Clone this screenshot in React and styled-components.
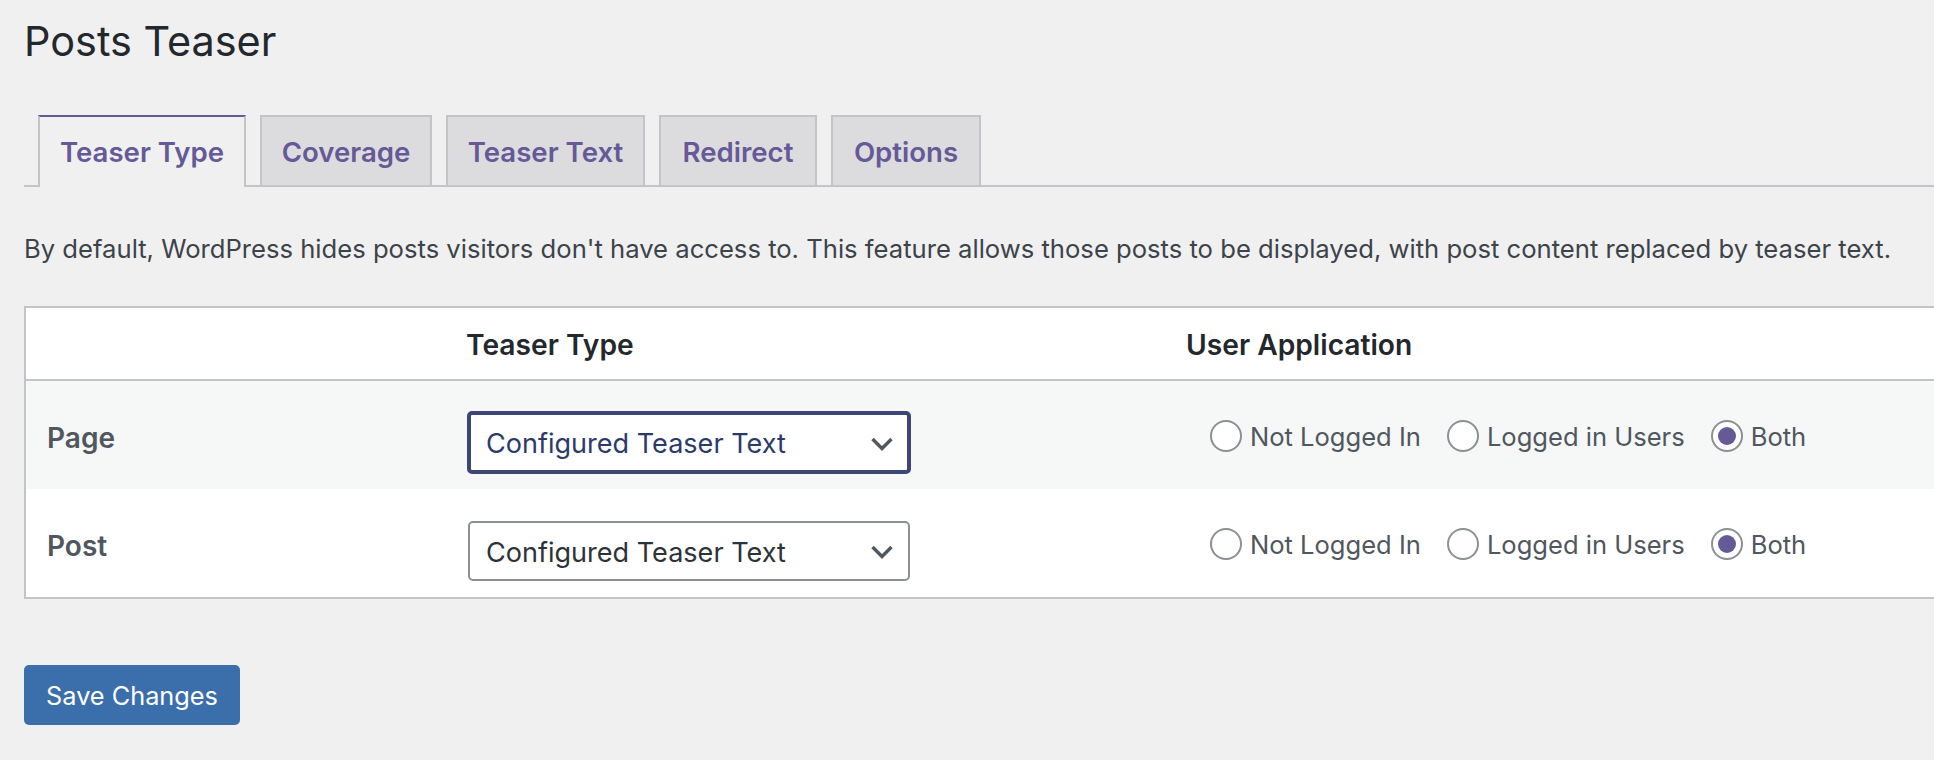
import styled, { createGlobalStyle } from "styled-components";

const GlobalStyle = createGlobalStyle`
  html, body {
    margin: 0;
    padding: 0;
    background: #f0f0f1;
    overflow: hidden;
  }
  body {
    font-family: Inter, "Liberation Sans", sans-serif;
    color: #3c434a;
  }
`;

const Page = styled.div`
  width: 1934px;
  height: 760px;
  padding: 18px 0 0 24px;
  box-sizing: border-box;
  overflow: hidden;
`;

const Title = styled.h1`
  margin: 0;
  height: 46px;
  font-size: 41.4px;
  line-height: 46px;
  font-weight: 400;
  color: #23282d;
`;

const TabBar = styled.div`
  display: flex;
  align-items: flex-start;
  gap: 14px;
  margin-top: 51px;
  padding-left: 14px;
  height: 70px;
  border-bottom: 2px solid #c3c4c7;
`;

const Tab = styled.div`
  box-sizing: border-box;
  flex: none;
  width: ${props => props.$width}px;
  height: 72px;
  padding-top: ${props => (props.$active ? "0" : "2px")};
  display: flex;
  align-items: center;
  justify-content: center;
  font-size: 27.6px;
  font-weight: 600;
  color: #655997;
  background: ${props => (props.$active ? "#f0f0f1" : "#dcdcde")};
  border: 2px solid #c3c4c7;
  border-top-color: ${props => (props.$active ? "#655997" : "#c3c4c7")};
  border-bottom: ${props => (props.$active ? "none" : "2px solid #c3c4c7")};
`;

const Intro = styled.p`
  margin: 45px 0 0;
  height: 34px;
  font-size: 25.63px;
  line-height: 34px;
  white-space: nowrap;
`;

const Table = styled.div`
  margin-top: 40px;
  width: 2000px;
  background: #fff;
  border: 2px solid #c3c4c7;
`;

const Row = styled.div`
  display: grid;
  grid-template-columns: 441px 720px 1fr;
  align-items: ${props => (props.$head ? "center" : "start")};
  height: ${props => props.$height}px;
  background: ${props => (props.$shaded ? "#f6f7f7" : "#fff")};
  border-bottom: ${props => (props.$head ? "2px solid #c3c4c7" : "none")};
`;

const HeadCell = styled.div`
  padding-top: 2px;
  margin-left: -1px;
  font-size: 28.2px;
  font-weight: 600;
  color: #23282d;
`;

const RowLabel = styled.div`
  padding: 40px 0 0 21px;
  font-size: 28px;
  line-height: 34px;
  font-weight: 600;
  color: #50575e;
`;

const Select = styled.div`
  box-sizing: border-box;
  display: flex;
  align-items: center;
  justify-content: space-between;
  width: ${props => (props.$focus ? "444px" : "442px")};
  height: ${props => (props.$focus ? "63px" : "60px")};
  margin: ${props => (props.$focus ? "30px 0 0 0" : "32px 0 0 1px")};
  padding: 2px ${props => (props.$focus ? "13px" : "14px")} 0 ${props => (props.$focus ? "15px" : "16px")};
  font-size: 27.05px;
  color: ${props => (props.$focus ? "#2c3a6b" : "#2c3338")};
  background: #fff;
  border: ${props => (props.$focus ? "4px solid #3e4677" : "2px solid #8c8f94")};
  border-radius: 5px;
`;

const Chevron = styled.svg`
  width: 24px;
  height: 24px;
  flex: none;
`;

const Radios = styled.div`
  display: flex;
  align-items: center;
  padding: 39px 0 0 23px;
`;

const RadioItem = styled.label`
  display: flex;
  align-items: center;
  gap: 8px;
  margin-right: ${props => props.$gap}px;
  font-size: 25.55px;
  color: #50575e;
`;

const RadioMark = styled.span`
  box-sizing: border-box;
  width: 32px;
  height: 32px;
  border-radius: 50%;
  border: 2px solid #8c8f94;
  background: #fff;
  display: flex;
  align-items: center;
  justify-content: center;

  &::after {
    content: "";
    display: ${props => (props.$checked ? "block" : "none")};
    width: 18px;
    height: 18px;
    border-radius: 50%;
    background: #655997;
  }
`;

const SaveButton = styled.button`
  display: block;
  margin-top: 66px;
  width: 216px;
  height: 60px;
  padding: 1px 0 0;
  border: none;
  border-radius: 5px;
  background: #3b6fab;
  color: #fff;
  font-family: inherit;
  font-size: 25.3px;
`;

const tabs = [
  { label: "Teaser Type", width: 208, active: true },
  { label: "Coverage", width: 172 },
  { label: "Teaser Text", width: 199 },
  { label: "Redirect", width: 158 },
  { label: "Options", width: 150 },
];

function TeaserRow({ label, shaded, focus, height }) {
  return (
    <Row $shaded={shaded} $height={height}>
      <RowLabel>{label}</RowLabel>
      <Select $focus={focus}>
        Configured Teaser Text
        <Chevron viewBox="0 0 24 24" fill="none" stroke="#50575e" strokeWidth="3.4">
          <path d="M2.5 7l9.5 9.5 9.5-9.5" />
        </Chevron>
      </Select>
      <Radios>
        <RadioItem $gap={26}><RadioMark />Not Logged In</RadioItem>
        <RadioItem $gap={26}><RadioMark />Logged in Users</RadioItem>
        <RadioItem><RadioMark $checked />Both</RadioItem>
      </Radios>
    </Row>
  );
}

export default function App() {
  return (
    <Page>
      <GlobalStyle />
      <Title>Posts Teaser</Title>
      <TabBar>
        {tabs.map(tab => (
          <Tab key={tab.label} $active={tab.active} $width={tab.width}>{tab.label}</Tab>
        ))}
      </TabBar>
      <Intro>By default, WordPress hides posts visitors don't have access to. This feature allows those posts to be displayed, with post content replaced by teaser text.</Intro>
      <Table>
        <Row $head $height={71}>
          <span />
          <HeadCell>Teaser Type</HeadCell>
          <HeadCell>User Application</HeadCell>
        </Row>
        <TeaserRow label="Page" shaded focus height={108} />
        <TeaserRow label="Post" height={108} />
      </Table>
      <SaveButton>Save Changes</SaveButton>
    </Page>
  );
}
